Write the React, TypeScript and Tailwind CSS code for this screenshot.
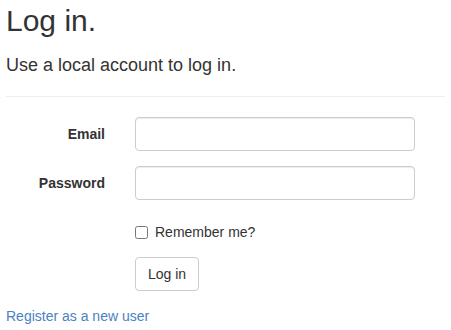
export default function App() {
  return (
    <div className="min-h-[330px] bg-white px-[6px] text-[14px] text-[#333] font-['Liberation_Sans',Arial,sans-serif]">
      <h2 className="pt-[4px] text-[30px] leading-[33px]">Log in.</h2>
      <h4 className="mt-[18px] text-[18px] leading-[20px]">Use a local account to log in.</h4>
      <hr className="mt-[21px] border-t border-[#eee]" />

      <form className="mt-[20px] flex flex-col">
        <div className="flex items-center">
          <label className="w-[99px] text-right font-bold">Email</label>
          <input
            type="email"
            className="ml-[30px] h-[34px] w-[280px] rounded-[4px] border border-[#ccc] px-3 shadow-[inset_0_1px_1px_rgba(0,0,0,0.075)] outline-none"
          />
        </div>
        <div className="mt-[15px] flex items-center">
          <label className="w-[99px] text-right font-bold">Password</label>
          <input
            type="password"
            className="ml-[30px] h-[34px] w-[280px] rounded-[4px] border border-[#ccc] px-3 shadow-[inset_0_1px_1px_rgba(0,0,0,0.075)] outline-none"
          />
        </div>
        <div className="mt-[22px] ml-[129px] flex items-center">
          <input type="checkbox" className="m-0 h-[13px] w-[13px] accent-[#ddd]" />
          <label className="ml-[7px] leading-[20px]">Remember me?</label>
        </div>
        <div className="mt-[15px] ml-[129px]">
          <button
            type="button"
            className="h-[34px] rounded-[4px] border border-[#ccc] bg-white px-3 leading-[20px] text-[#333]"
          >
            Log in
          </button>
        </div>
      </form>

      <p className="mt-[15px]">
        <a href="#" className="text-[#4a82c3]">Register as a new user</a>
      </p>
    </div>
  );
}
